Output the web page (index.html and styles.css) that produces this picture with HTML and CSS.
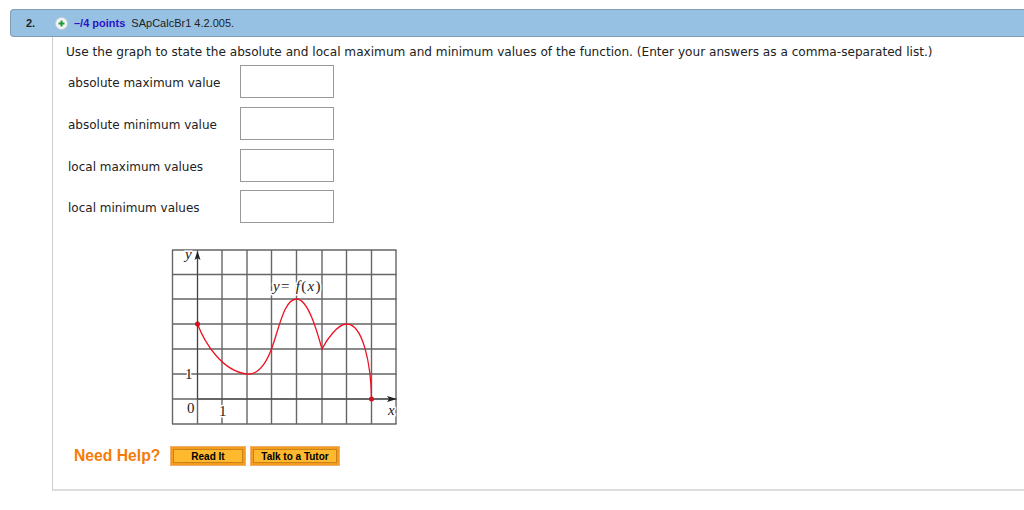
FILE: index.html
```html
<!DOCTYPE html>
<html lang="en">
<head>
    <meta charset="UTF-8">
    <meta name="viewport" content="width=device-width, initial-scale=1.0">
    <title>Question 2</title>
    <link rel="stylesheet" href="styles.css">
</head>
<body>
    <div class="question-bar">
        <span class="question-num">2.</span>
        <span class="plus-icon">
            <svg width="13" height="13" viewBox="0 0 13 13">
                <circle cx="6.5" cy="6.5" r="6" fill="#f4f4f4" stroke="#c4ccd4"/>
                <path d="M6.5 3.5v6M3.5 6.5h6" stroke="#1f9a3c" stroke-width="2"/>
            </svg>
        </span>
        <span class="points">&ndash;/4 points</span>
        <span class="source">SApCalcBr1 4.2.005.</span>
    </div>
    <div class="question-body">
        <p class="prompt">Use the graph to state the absolute and local maximum and minimum values of the function. (Enter your answers as a comma-separated list.)</p>
        <div class="answers">
            <label class="answer-label">absolute maximum value</label>
            <input class="answer-input" type="text">
            <label class="answer-label">absolute minimum value</label>
            <input class="answer-input" type="text">
            <label class="answer-label">local maximum values</label>
            <input class="answer-input" type="text">
            <label class="answer-label">local minimum values</label>
            <input class="answer-input" type="text">
        </div>
        <svg class="graph" width="226" height="176" viewBox="0 0 226 176">
            <g class="grid">
                <path d="M1.5 1V175M26.5 1V175M51 1V175M76 1V175M100.5 1V175M125.5 1V175M151 1V175M175.5 1V175M200.5 1V175M225 1V175"/>
                <path d="M1 1H225.5M1 25.5H225.5M1 50H225.5M1 75H225.5M1 100H225.5M1 125H225.5M1 150H225.5M1 175H225.5"/>
            </g>
            <path class="axis" d="M26.5 150V8M26.5 150H220"/>
            <path class="arrow" d="M26.5 2L29.5 11L26.5 9L23.5 11Z"/>
            <path class="arrow" d="M226 150L216 147L218 150L216 153Z"/>
            <path class="curve" d="M26.5 75C33 92 50 122 76 125C88 126 96 112 100.5 100C108 80 113 50 125.5 50C137 50 146 82 151 100C156 90 167 75 175.5 75C192 75 200 115 200.5 150"/>
            <circle class="dot" cx="26.5" cy="75" r="2.5"/>
            <circle class="dot" cx="200.5" cy="150" r="2.5"/>
            <text class="graph-text italic" x="14" y="10">y</text>
            <text class="graph-text" x="14" y="130">1</text>
            <text class="graph-text" x="16" y="164">0</text>
            <text class="graph-text" x="48" y="167">1</text>
            <text class="graph-text italic" x="217" y="166">x</text>
            <text class="graph-text formula" x="102" y="42"><tspan class="italic">y</tspan>= <tspan class="italic">f</tspan>(<tspan class="italic">x</tspan>)</text>
        </svg>
        <div class="help">
            <span class="help-title">Need Help?</span>
            <button class="help-btn read-btn">Read It</button>
            <button class="help-btn tutor-btn">Talk to a Tutor</button>
        </div>
    </div>
</body>
</html>
```

FILE: styles.css
```css
:root {
    --bar-color: #97c1e2;
    --border-color: #cccccc;
    --text-color: #222222;
    --help-color: #f57c0a;
}

body {
    margin: 0;
    background-color: white;
    color: var(--text-color);
    font-family: 'DejaVu Sans', Verdana, sans-serif;
}

.question-bar {
    display: flex;
    align-items: center;
    height: 26px;
    margin: 9px 0 0 10px;
    padding-left: 15px;
    background-color: var(--bar-color);
    border: 1px solid #7f9db5;
    border-right: none;
    border-radius: 4px 0 0 4px;
    font-family: 'Liberation Sans', Arial, sans-serif;
    font-size: 11px;
}

.question-num {
    width: 29px;
    font-weight: bold;
}

.plus-icon {
    display: flex;
    width: 19px;
}

.points {
    margin-right: 6px;
    color: #2a14c8;
    font-weight: bold;
}

.question-body {
    height: 452px;
    margin-left: 52px;
    padding-left: 13px;
    border-left: 1px solid var(--border-color);
    border-bottom: 2px solid #dddddd;
}

.prompt {
    margin: 0;
    padding-top: 8px;
    font-size: 12.12px;
    line-height: 14px;
}

.answers {
    display: grid;
    grid-template-columns: 172px 94px;
    grid-auto-rows: 33px;
    row-gap: 8.75px;
    align-items: center;
    margin: 6px 0 0 2px;
}

.answer-label {
    padding-top: 3px;
    font-size: 12px;
}

.answer-input {
    box-sizing: border-box;
    width: 94px;
    height: 33px;
    margin: 0;
    background-color: white;
    border: 1px solid #999999;
}

.graph {
    display: block;
    margin: 26px 0 0 105px;
    overflow: visible;
}

.grid path {
    fill: none;
    stroke: #666666;
    stroke-width: 1.4;
}

.axis {
    fill: none;
    stroke: #444444;
    stroke-width: 1;
}

.arrow {
    fill: #222222;
}

.curve {
    fill: none;
    stroke: #ee1122;
    stroke-width: 1.3;
}

.dot {
    fill: #d40f1f;
}

.graph-text {
    fill: #222222;
    stroke: white;
    stroke-width: 3px;
    paint-order: stroke;
    font-family: 'Liberation Serif', 'Times New Roman', serif;
    font-size: 15px;
}

.formula {
    letter-spacing: 1.3px;
}

.italic {
    font-style: italic;
}

.help {
    display: flex;
    align-items: center;
    margin: 21px 0 0 8px;
}

.help-title {
    width: 96px;
    color: var(--help-color);
    font-family: 'Liberation Sans', Arial, sans-serif;
    font-size: 15.7px;
    font-weight: bold;
}

.help-btn {
    box-sizing: border-box;
    height: 20px;
    padding: 0;
    background-color: #ffb92e;
    border: 1px solid #eeb070;
    box-shadow: inset 0 0 0 2px #f59a1b, inset 0 0 0 3px #c9811a;
    color: black;
    font-family: 'Liberation Sans', Arial, sans-serif;
    font-size: 10px;
    font-weight: bold;
    cursor: pointer;
}

.read-btn {
    width: 76px;
    margin-right: 4px;
}

.tutor-btn {
    width: 90px;
}
```
